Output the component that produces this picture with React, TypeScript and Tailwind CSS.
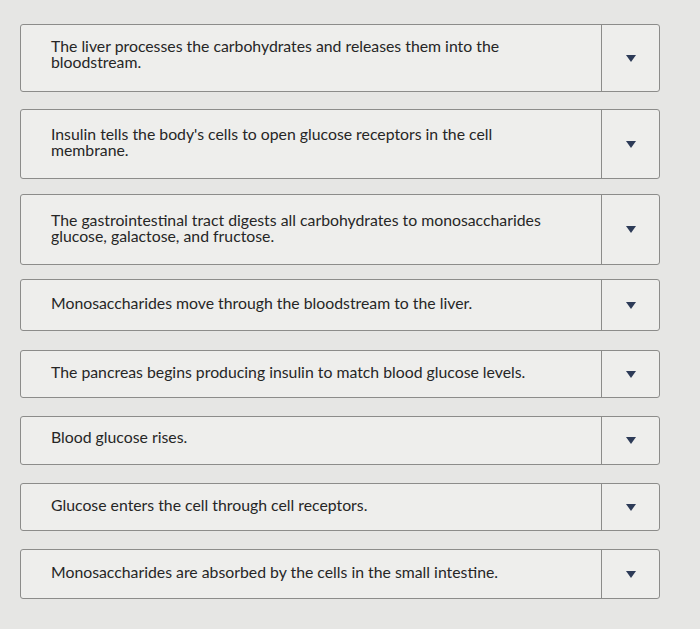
import React from 'react';

const rows = [
  { text: 'The liver processes the carbohydrates and releases them into the bloodstream.', h: 'h-[68px]', mt: 'mt-[24px]', pb: 'pb-[8px]' },
  { text: "Insulin tells the body's cells to open glucose receptors in the cell membrane.", h: 'h-[70px]', mt: 'mt-[17px]', pb: 'pb-[4px]' },
  { text: 'The gastrointestinal tract digests all carbohydrates to monosaccharides glucose, galactose, and fructose.', h: 'h-[71px]', mt: 'mt-[15px]', pb: 'pb-[3px]' },
  { text: 'Monosaccharides move through the bloodstream to the liver.', h: 'h-[52px]', mt: 'mt-[14px]', pb: 'pb-[3px]' },
  { text: 'The pancreas begins producing insulin to match blood glucose levels.', h: 'h-[48px]', mt: 'mt-[19px]', pb: 'pb-[3px]' },
  { text: 'Blood glucose rises.', h: 'h-[49px]', mt: 'mt-[18px]', pb: 'pb-[6px]' },
  { text: 'Glucose enters the cell through cell receptors.', h: 'h-[48px]', mt: 'mt-[18px]', pb: 'pb-[3px]' },
  { text: 'Monosaccharides are absorbed by the cells in the small intestine.', h: 'h-[50px]', mt: 'mt-[18px]', pb: 'pb-[3px]' },
];

export default function App() {
  return (
    <div
      className="w-[700px] h-[629px] bg-[#e6e6e4] overflow-hidden pl-[20px]"
      style={{ fontFamily: 'Lato, "Open Sans", sans-serif' }}
    >
      {rows.map((r) => (
        <div
          key={r.text}
          className={`${r.mt} ${r.h} w-[640px] flex border border-[#8c8c8a] rounded-[3px] bg-[#eeeeec]`}
        >
          {/* Statement text */}
          <div className={`flex-1 flex items-center pl-[30px] pr-[60px] ${r.pb} text-[15.8px] leading-[16.5px] text-[#262626]`}>
            {r.text}
          </div>
          {/* Dropdown cell */}
          <div className="w-[58px] border-l border-[#8c8c8a] flex items-center justify-center">
            <svg width="10" height="7" viewBox="0 0 10 7">
              <path d="M0 0 L10 0 L5 7 Z" fill="#2d3b57" />
            </svg>
          </div>
        </div>
      ))}
    </div>
  );
}
